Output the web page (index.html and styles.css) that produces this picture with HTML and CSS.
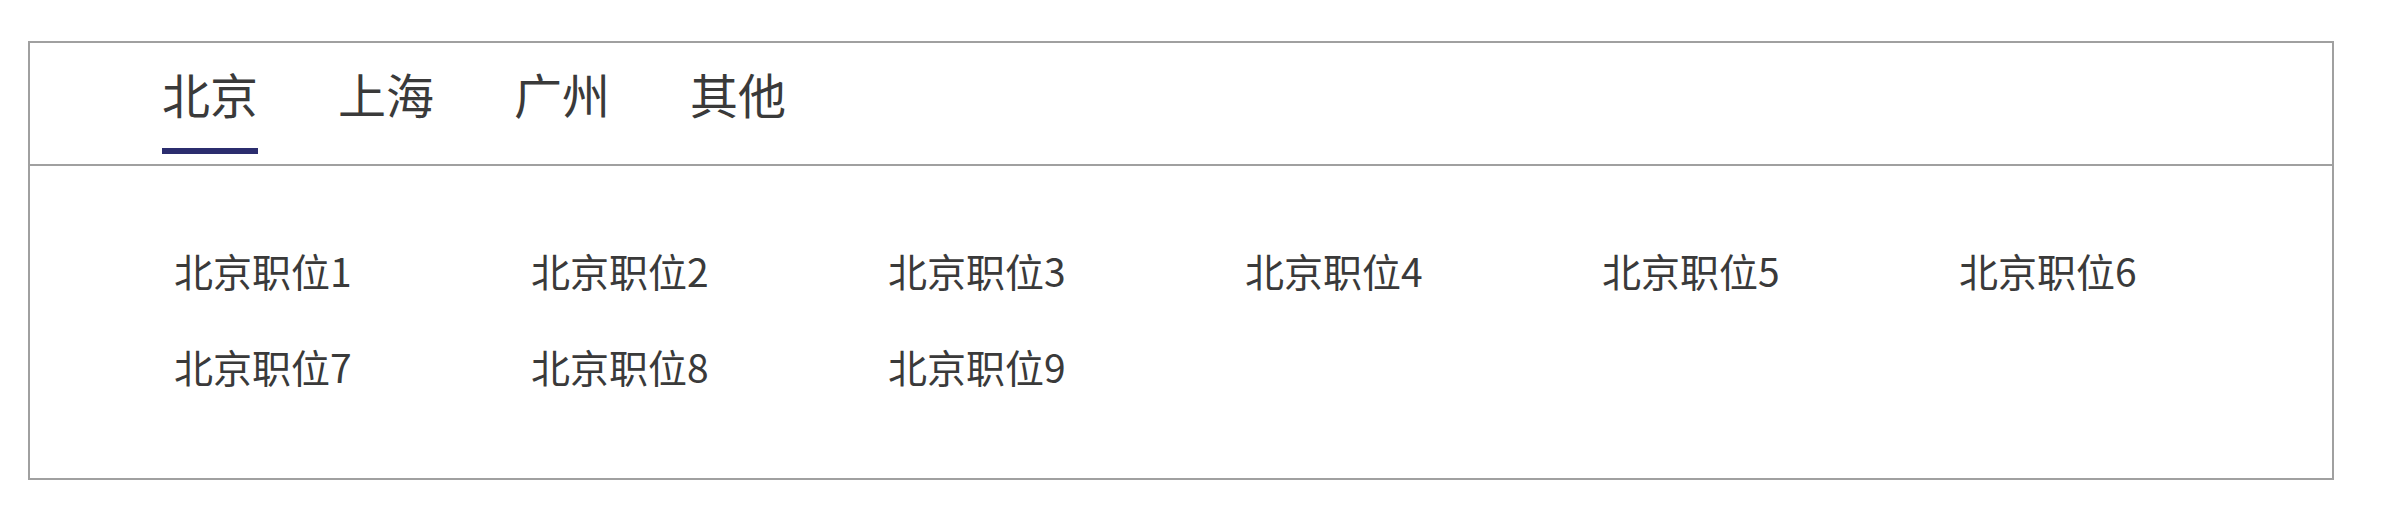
FILE: index.html
```html
<!DOCTYPE html>
<html lang="zh-CN">
<head>
<meta charset="utf-8">
<title>职位</title>
<link rel="stylesheet" href="styles.css">
</head>
<body>
<div class="panel">
  <div class="tabs">
    <div class="tab active">北京</div>
    <div class="tab">上海</div>
    <div class="tab">广州</div>
    <div class="tab">其他</div>
  </div>
  <div class="jobs">
    <div class="job">北京职位1</div>
    <div class="job">北京职位2</div>
    <div class="job">北京职位3</div>
    <div class="job">北京职位4</div>
    <div class="job">北京职位5</div>
    <div class="job">北京职位6</div>
    <div class="job">北京职位7</div>
    <div class="job">北京职位8</div>
    <div class="job">北京职位9</div>
  </div>
</div>
</body>
</html>
```
FILE: styles.css
```css
html, body {
  margin: 0;
  padding: 0;
  background: #ffffff;
}
body {
  font-family: "Noto Sans CJK SC", "Noto Sans", sans-serif;
  color: #3a3a3a;
}
.panel {
  box-sizing: border-box;
  width: 2306px;
  margin: 41px 0 0 28px;
  border: 2px solid #a0a0a0;
}
.tabs {
  display: flex;
  gap: 80px;
  padding: 26px 0 10px 132px;
  border-bottom: 2px solid #a0a0a0;
}
.tab {
  font-size: 48px;
  line-height: 48px;
  padding-bottom: 31px;
  border-bottom: 6px solid transparent;
}
.tab.active {
  border-bottom-color: #2b2d6e;
}
.jobs {
  display: grid;
  grid-template-columns: repeat(6, 357px);
  row-gap: 57px;
  padding: 85px 0 92px 144px;
}
.job {
  font-size: 39px;
  line-height: 39px;
  white-space: nowrap;
}
```
